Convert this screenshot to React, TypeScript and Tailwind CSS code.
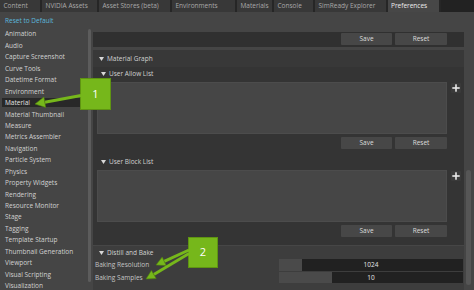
import React from "react";

const tabs = [
  { label: "Content", cls: "w-[40px]" },
  { label: "NVIDIA Assets", cls: "w-[55px]" },
  { label: "Asset Stores (beta)", cls: "w-[71px]" },
  { label: "Environments", cls: "w-[63px]" },
  { label: "Materials", cls: "w-[35px]" },
  { label: "Console", cls: "w-[39px]" },
  { label: "SimReady Explorer", cls: "w-[71px]" },
];

const items = [
  "Animation",
  "Audio",
  "Capture Screenshot",
  "Curve Tools",
  "Datetime Format",
  "Environment",
  "Material",
  "Material Thumbnail",
  "Measure",
  "Metrics Assembler",
  "Navigation",
  "Particle System",
  "Physics",
  "Property Widgets",
  "Rendering",
  "Resource Monitor",
  "Stage",
  "Tagging",
  "Template Startup",
  "Thumbnail Generation",
  "Viewport",
  "Visual Scripting",
  "Visualization",
];

function Btn({ label, w }: { label: string; w: string }) {
  return (
    <div
      className={`${w} h-[12px] flex items-center justify-center rounded-[1px] bg-[#474747] text-[6.5px] text-[#dcdcdc]`}
    >
      {label}
    </div>
  );
}

function SaveReset() {
  return (
    <div className="flex gap-[3px]">
      <Btn label="Save" w="w-[51px]" />
      <Btn label="Reset" w="w-[52px]" />
    </div>
  );
}

function Tri() {
  return (
    <svg width="5" height="4" viewBox="0 0 5 4" className="shrink-0">
      <polygon points="0,0 5,0 2.5,4" fill="#d8d8d8" />
    </svg>
  );
}

function Plus() {
  return (
    <div className="w-[10px] h-[10px] flex items-center justify-center bg-[#3a3a3a] rounded-[1px]">
      <svg width="8" height="8" viewBox="0 0 8 8">
        <rect x="3.2" y="0.3" width="1.6" height="7.4" fill="#e8e8e8" />
        <rect x="0.3" y="3.2" width="7.4" height="1.6" fill="#e8e8e8" />
      </svg>
    </div>
  );
}

function ListBlock() {
  return (
    <>
      <div className="flex h-[52px] pl-[4px]">
        <div className="flex-1 bg-[#464646] border border-[#4c4c4c]" />
        <div className="w-[17px] flex justify-center pt-[1px]">
          <Plus />
        </div>
      </div>
      <div className="h-[16px] flex justify-end items-start pt-[3px] pr-[17px]">
        <SaveReset />
      </div>
    </>
  );
}

export default function App() {
  return (
    <div
      className="relative w-[474px] h-[290px] overflow-hidden bg-[#454545] text-[#d2d2d2] flex flex-col font-medium"
      style={{ fontFamily: '"Open Sans", "Noto Sans", sans-serif' }}
    >
      {/* Tab bar */}
      <div className="h-[12px] flex gap-[2px] bg-[#262626] shrink-0">
        {tabs.map((t) => (
          <div
            key={t.label}
            className={`${t.cls} h-full bg-[#383838] flex items-center pl-[3.5px] text-[6.5px] text-[#a9a9a9] whitespace-nowrap overflow-hidden`}
          >
            {t.label}
          </div>
        ))}
        <div className="w-[51px] h-full bg-[#474747] flex items-center pl-[3px] text-[6.5px] text-[#eeeeee] whitespace-nowrap">
          Preferences
        </div>
        <div className="flex-1 bg-[#222222]" />
      </div>

      {/* Reset to default row */}
      <div className="h-[17px] flex items-center pl-[5px] text-[6.5px] text-[#5bb7dc] shrink-0">
        Reset to Default
      </div>

      {/* Body */}
      <div className="flex flex-1 min-h-0">
        {/* Sidebar */}
        <div className="w-[87px] flex flex-col -mt-[0.4px]">
          {items.map((it) => (
            <div key={it} className="h-[11.44px] flex items-center shrink-0">
              {it === "Material" ? (
                <div className="ml-[2px] w-[83px] h-[9px] bg-[#282828] flex items-center pl-[3px] text-[6.5px] text-[#e4e4e4] whitespace-nowrap">
                  {it}
                </div>
              ) : (
                <div className="pl-[5px] text-[6.5px] whitespace-nowrap">{it}</div>
              )}
            </div>
          ))}
        </div>
        {/* sidebar scrollbar */}
        <div className="w-[6px] pl-[0.5px] pt-[0.3px]">
          <div className="w-[3.5px] h-[253px] rounded-full bg-[#5c5c5c]" />
        </div>

        {/* Main panel */}
        <div className="w-[371px] flex flex-col">
          <div className="h-[3px]" />
          <div className="h-[15px] bg-[#303030] flex justify-end items-start pt-[0.5px] pr-[17px]">
            <SaveReset />
          </div>
          <div className="h-[3px]" />
          {/* Material Graph */}
          <div className="h-[195px] bg-[#343434] flex flex-col">
            <div className="h-[17px] flex items-center gap-[3px] pl-[6px] pt-[1px] bg-[#383838] text-[6.5px]">
              <Tri />
              <span>Material Graph</span>
            </div>
            <div className="h-[14.7px] flex items-center gap-[3px] pl-[8px] text-[6.5px]">
              <Tri />
              <span>User Allow List</span>
            </div>
            <ListBlock />
            <div className="h-[5px]" />
            <div className="h-[15px] flex items-center gap-[3px] pl-[8px] text-[6.5px]">
              <Tri />
              <span>User Block List</span>
            </div>
            <ListBlock />
          </div>
          {/* Distill and Bake */}
          <div className="flex-1 bg-[#3d3d3d] border-t border-[#464646] flex flex-col">
            <div className="h-[13px] flex items-center gap-[3px] pl-[6px] text-[6.5px]">
              <Tri />
              <span>Distill and Bake</span>
            </div>
            <div className="flex flex-col gap-[1.3px] pr-[1px]">
              <div className="h-[11.7px] flex items-center">
                <div className="w-[186px] pl-[2px] text-[6.5px] text-[#c4c4c4]">Baking Resolution</div>
                <div className="flex-1 h-full bg-[#212121] flex relative">
                  <div className="w-[23px] h-full bg-[#4a4a4a]" />
                  <div className="absolute inset-0 flex items-center justify-center text-[6.5px] text-[#e6e6e6]">
                    1024
                  </div>
                </div>
              </div>
              <div className="h-[11px] flex items-center">
                <div className="w-[186px] pl-[2px] text-[6.5px] text-[#c4c4c4]">Baking Samples</div>
                <div className="flex-1 h-full bg-[#212121] flex relative">
                  <div className="w-[53px] h-full bg-[#4a4a4a]" />
                  <div className="absolute inset-0 flex items-center justify-center text-[6.5px] text-[#e6e6e6]">
                    10
                  </div>
                </div>
              </div>
            </div>
          </div>
        </div>

        {/* right scroll column */}
        <div className="w-[10px] flex flex-col pl-[2px]">
          <div className="h-[141px]" />
          <div className="w-[5px] h-[115px] rounded-full bg-[#565656]" />
        </div>
      </div>

      {/* Callout 1 */}
      <div className="absolute left-[80px] top-[78px] w-[31px] h-[32px] bg-[#76b71b] border border-[#5f9412] flex items-center justify-center text-[11px] font-normal text-white">
        1
      </div>
      {/* Callout 2 */}
      <div className="absolute left-[188px] top-[237px] w-[30px] h-[31px] bg-[#76b71b] border border-[#5f9412] flex items-center justify-center text-[11px] font-normal text-white">
        2
      </div>

      <svg className="absolute inset-0 pointer-events-none" width="474" height="290" viewBox="0 0 474 290">
        <g stroke="#4f7d0e" strokeWidth="0.6" fill="#76b71b">
          <line x1="81" y1="95.5" x2="44.8" y2="102.2" stroke="#76b71b" strokeWidth="3.2" />
          <polygon points="35,104 45.7,107.4 43.9,97" />
          <line x1="189" y1="250" x2="164.2" y2="261.4" stroke="#76b71b" strokeWidth="3" />
          <polygon points="156,265 166.2,265.6 162.2,257.1" />
          <line x1="189" y1="253.5" x2="153.8" y2="274.5" stroke="#76b71b" strokeWidth="3" />
          <polygon points="146,279 156.2,278.6 151.4,270.4" />
        </g>
      </svg>
    </div>
  );
}
